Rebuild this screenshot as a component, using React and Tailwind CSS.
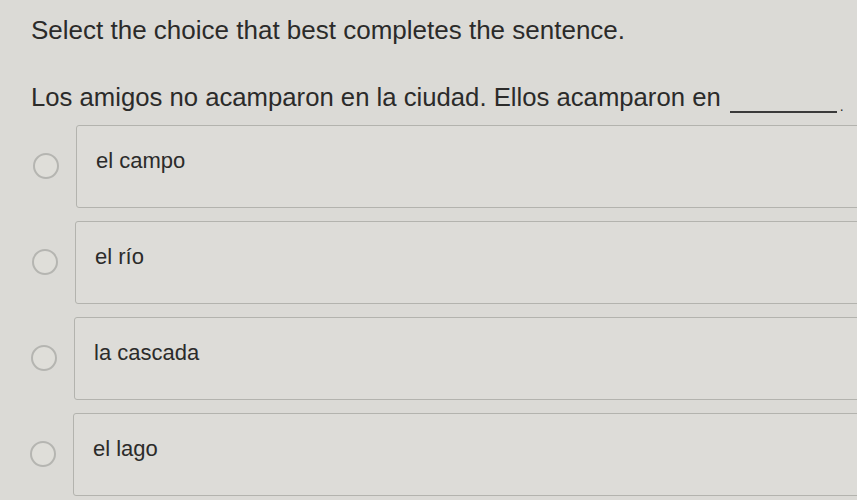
const choices = ["el campo", "el río", "la cascada", "el lago"]

export default function App() {
  return (
    <div
      className="w-[857px] h-[500px] overflow-hidden bg-[#dbdad6] text-[#2b2b2a]"
      style={{ fontFamily: '"Liberation Sans", Arial, sans-serif' }}
    >
      {/* Question */}
      <div className="pl-[31px] pt-[12px]">
        <h1 className="text-[26px] leading-[36px] whitespace-nowrap">Select the choice that best completes the sentence.</h1>
        <p className="text-[25.7px] leading-[36px] mt-[31px] flex items-end whitespace-nowrap">
          <span>Los amigos no acamparon en la ciudad. Ellos acamparon en</span>
          <span className="inline-block w-[107px] border-b-2 border-[#3a3a3a] ml-[9px] mb-[2px]"></span>
          <span className="text-[14px] leading-[14px] ml-[3px] mb-[2px]">.</span>
        </p>
      </div>

      {/* Choices */}
      <ul className="mt-[10px] flex flex-col gap-[13px]">
        {choices.map((c, i) => (
          <li key={c} className="flex items-center" style={{ paddingLeft: 76 - i }}>
            <span className="shrink-0 -ml-[43px] mr-[17px] -mt-[2px] w-[26px] h-[26px] rounded-full border-2 border-[#b5b5b1] bg-[#dfded9]"></span>
            <div className="shrink-0 w-[900px] h-[83px] rounded-[3px] border border-[#b3b3ae] bg-[#dddcd8] pl-[19px] pt-[18px]">
              <span className="text-[22px]">{c}</span>
            </div>
          </li>
        ))}
      </ul>
    </div>
  )
}
